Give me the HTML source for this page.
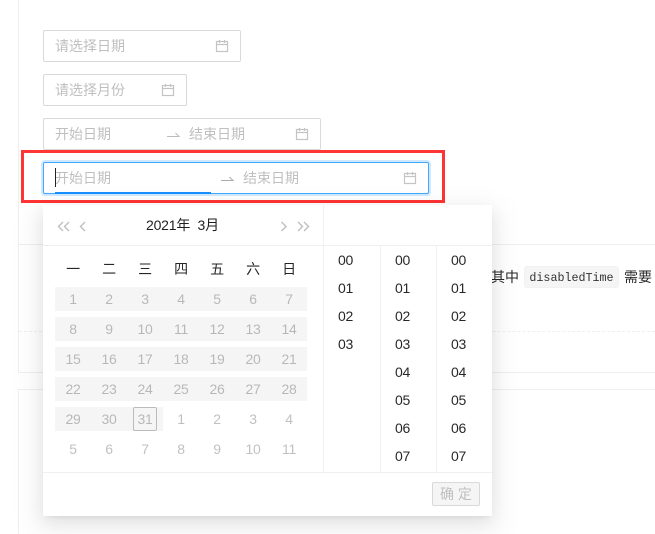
<!DOCTYPE html>
<html><head><meta charset="utf-8">
<style>
*{box-sizing:border-box}
html,body{margin:0;padding:0;width:655px;height:534px;overflow:hidden;background:#fff}
body{position:relative;font:14px/22px "Liberation Sans","Noto Sans CJK SC",sans-serif;color:rgba(0,0,0,.85)}
.a{position:absolute}
.inp{position:absolute;height:32px;border:1px solid #d9d9d9;border-radius:2px;background:#fff}
.ph{position:absolute;color:#bfbfbf;white-space:nowrap;line-height:22px;height:22px}
.line{position:absolute;background:#f0f0f0}
.row{position:absolute;left:12px;width:252px;height:30px;display:flex}
.row span{width:36px;height:24px;line-height:24px;text-align:center;letter-spacing:-.3px}
.d span{color:rgba(0,0,0,.25)}
.bg{position:absolute;background:#f5f5f5;height:24px}
.col{position:absolute;top:41px;width:40px;letter-spacing:-.3px}
.col div{height:28px;line-height:28px}
svg{position:absolute;overflow:visible}
</style></head><body>
<div class="line" style="left:18px;top:0;width:1px;height:373px;background:#efefef"></div>
<div class="line" style="left:18px;top:372px;width:637px;height:1px;background:#efefef"></div>
<div class="line" style="left:18px;top:389px;width:1px;height:145px;background:#efefef"></div>
<div class="line" style="left:18px;top:389px;width:637px;height:1px;background:#efefef"></div>
<div class="line" style="left:19px;top:244px;width:636px;height:1px;background:#efefef"></div>
<div class="a" style="left:19px;top:331px;width:636px;height:0;border-top:1px dashed #efefef"></div>

<span class="a" style="left:491px;top:266px;white-space:nowrap">其中</span>
<span class="a" style="left:524px;top:266px;width:95px;height:22px;background:#f5f5f5;border:1px solid #f2f2f2;border-radius:3px;font:11.7px/22px 'Liberation Mono',monospace;text-align:center;color:#333">disabledTime</span>
<span class="a" style="left:624px;top:266px;white-space:nowrap">需要</span>

<!-- inputs -->
<div class="inp" style="left:43px;top:30px;width:198px"></div>
<div class="ph" style="left:55px;top:35px">请选择日期</div>
<div class="inp" style="left:43px;top:74px;width:144px"></div>
<div class="ph" style="left:55px;top:79px">请选择月份</div>
<div class="inp" style="left:43px;top:118px;width:278px"></div>
<div class="ph" style="left:55px;top:123px">开始日期</div>
<div class="ph" style="left:189px;top:123px">结束日期</div>

<div class="a" style="left:21px;top:150px;width:424px;height:53px;border:3px solid #ff3434"></div>
<div class="inp" style="left:43px;top:162px;width:386px;border-color:#40a9ff;box-shadow:0 0 0 2px rgba(24,144,255,.2)"></div>
<div class="ph" style="left:55px;top:167px">开始日期</div>
<div class="ph" style="left:243px;top:167px">结束日期</div>
<div class="a" style="left:55px;top:192px;width:156px;height:2px;background:#1890ff"></div>
<div class="a" style="left:55px;top:168px;width:1px;height:19px;background:#222"></div>

<svg style="left:0;top:0" width="655" height="534" fill="none" stroke-width="1">
<path d="M167 136.5H179L175.5 133" stroke="#bbb"/>
<path d="M221 180.5H233L229.5 177" stroke="#aaa"/>
<g stroke="#c4c4c4" stroke-width="1.2">
<g><rect x="216.5" y="41.5" width="11" height="10"/><path d="M216.5 44.5H227.5M219.5 40V43M224.5 40V43"/></g>
<g transform="translate(-54,44)"><rect x="216.5" y="41.5" width="11" height="10"/><path d="M216.5 44.5H227.5M219.5 40V43M224.5 40V43"/></g>
<g transform="translate(80,88)"><rect x="216.5" y="41.5" width="11" height="10"/><path d="M216.5 44.5H227.5M219.5 40V43M224.5 40V43"/></g>
<g transform="translate(188,132)"><rect x="216.5" y="41.5" width="11" height="10"/><path d="M216.5 44.5H227.5M219.5 40V43M224.5 40V43"/></g>
</g>
</svg>

<!-- popup -->
<div class="a" style="left:43px;top:205px;width:449px;height:311px;background:#fff;box-shadow:0 3px 6px -4px rgba(0,0,0,.12),0 6px 16px rgba(0,0,0,.08),0 9px 28px 8px rgba(0,0,0,.05)">
  <div class="line" style="left:0;top:40px;width:449px;height:1px"></div>
  <div class="line" style="left:280px;top:0;width:1px;height:267px"></div>
  <div class="line" style="left:337px;top:41px;width:1px;height:226px"></div>
  <div class="line" style="left:393px;top:41px;width:1px;height:226px"></div>
  <div class="line" style="left:0;top:267px;width:449px;height:1px"></div>

  <svg style="left:0;top:0" width="449" height="40" fill="none" stroke="#bfbfbf" stroke-width="1.4">
    <path d="M20 17L15.5 21.5L20 26M26 17L21.5 21.5L26 26"/>
    <path d="M42 17L37.5 21.5L42 26"/>
    <path d="M238.5 17L243 21.5L238.5 26"/>
    <path d="M255 17L259.5 21.5L255 26M261 17L265.5 21.5L261 26"/>
  </svg>
  <div class="a" style="left:103px;top:9px;white-space:pre;letter-spacing:-.2px;color:rgba(0,0,0,.88)">2021年  3月</div>

  <div class="bg" style="left:12px;top:82px;width:252px"></div>
  <div class="bg" style="left:12px;top:112px;width:252px"></div>
  <div class="bg" style="left:12px;top:142px;width:252px"></div>
  <div class="bg" style="left:12px;top:172px;width:252px"></div>
  <div class="bg" style="left:12px;top:202px;width:108px"></div>
  <div class="a" style="left:90px;top:202px;width:24px;height:24px;border:1px solid #bbb;border-radius:2px"></div>

  <div class="row" style="top:52px"><span>一</span><span>二</span><span>三</span><span>四</span><span>五</span><span>六</span><span>日</span></div>
  <div class="row d" style="top:82px"><span>1</span><span>2</span><span>3</span><span>4</span><span>5</span><span>6</span><span>7</span></div>
  <div class="row d" style="top:112px"><span>8</span><span>9</span><span>10</span><span>11</span><span>12</span><span>13</span><span>14</span></div>
  <div class="row d" style="top:142px"><span>15</span><span>16</span><span>17</span><span>18</span><span>19</span><span>20</span><span>21</span></div>
  <div class="row d" style="top:172px"><span>22</span><span>23</span><span>24</span><span>25</span><span>26</span><span>27</span><span>28</span></div>
  <div class="row d" style="top:202px"><span>29</span><span>30</span><span>31</span><span>1</span><span>2</span><span>3</span><span>4</span></div>
  <div class="row d" style="top:232px"><span>5</span><span>6</span><span>7</span><span>8</span><span>9</span><span>10</span><span>11</span></div>

  <div class="col" style="left:295px"><div>00</div><div>01</div><div>02</div><div>03</div></div>
  <div class="col" style="left:352px"><div>00</div><div>01</div><div>02</div><div>03</div><div>04</div><div>05</div><div>06</div><div>07</div></div>
  <div class="col" style="left:408px"><div>00</div><div>01</div><div>02</div><div>03</div><div>04</div><div>05</div><div>06</div><div>07</div></div>

  <div class="a" style="left:389px;top:277px;width:48px;height:24px;background:#f5f5f5;border:1px solid #d9d9d9;border-radius:2px;color:#bfbfbf;text-align:center;line-height:22px;white-space:pre">确 定</div>
</div>
</body></html>
